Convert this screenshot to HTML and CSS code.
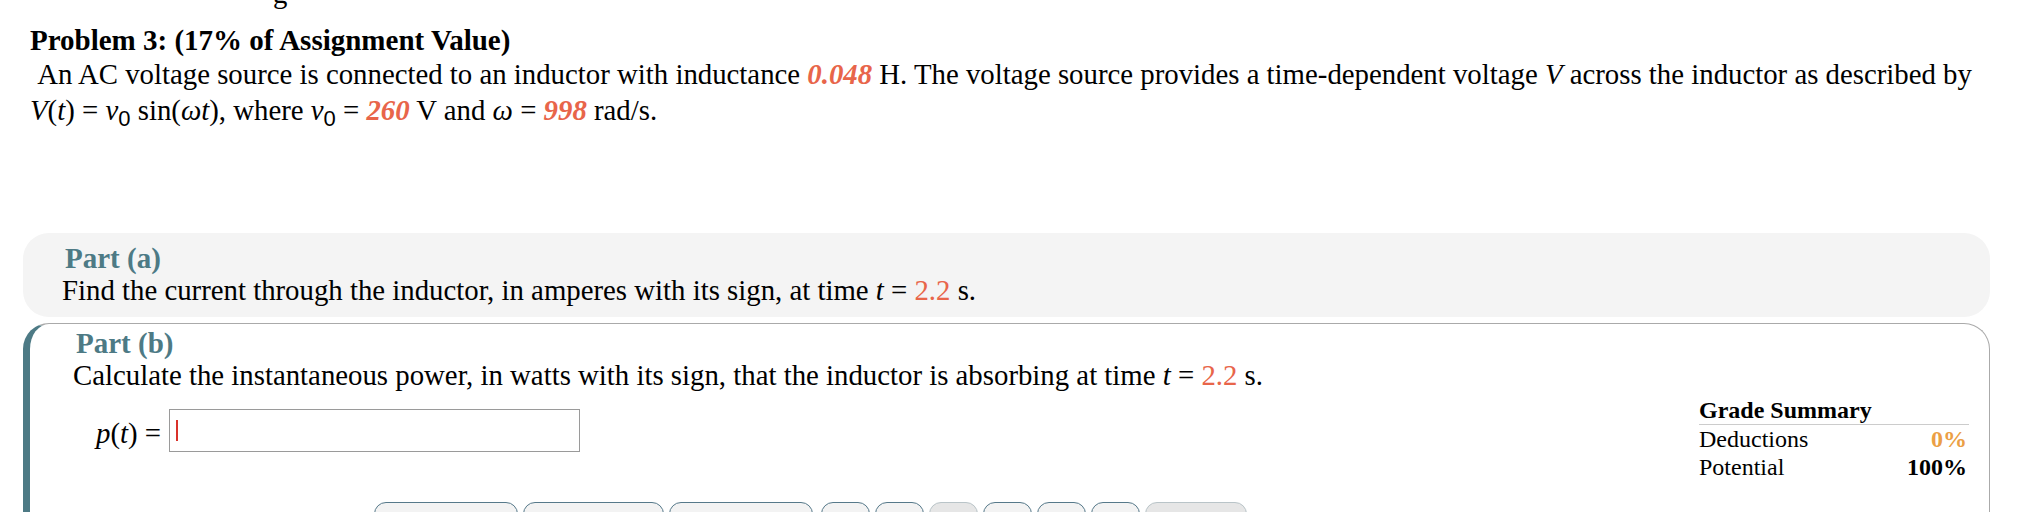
FILE: index.html
```html
<!DOCTYPE html>
<html lang="en">
<head>
<meta charset="utf-8">
<title>Problem 3</title>
<link rel="stylesheet" href="styles.css">
</head>
<body>
<div class="page">
  <div class="crumb">g</div>
  <div class="problem">
    <div class="problem-title">Problem 3: (17% of Assignment Value)</div>
    <div class="statement">&nbsp;An AC voltage source is connected to an inductor with inductance <span class="num">0.048</span> H. The voltage source provides a time-dependent voltage <i>V</i> across the inductor as described by<br><i>V</i>(<i>t</i>) = <i>v</i><sub class="sub">0</sub> sin(<i>ωt</i>), where <i>v</i><sub class="sub">0</sub> = <span class="num">260</span> V and <i>ω</i> = <span class="num">998</span> rad/s.</div>
  </div>

  <div class="part part-a">
    <div class="part-head">Part (a)</div>
    <div class="part-text">Find the current through the inductor, in amperes with its sign, at time <i>t</i> = <span class="val">2.2</span> s.</div>
  </div>

  <div class="part part-b">
    <div class="part-head">Part (b)</div>
    <div class="part-text">Calculate the instantaneous power, in watts with its sign, that the inductor is absorbing at time <i>t</i> = <span class="val">2.2</span> s.</div>
    <div class="answer-row">
      <div class="answer">
        <span class="answer-label"><i>p</i>(<i>t</i>) =</span>
        <div class="input"><span class="caret"></span></div>
      </div>
      <div class="grade">
        <div class="grade-head">Grade Summary</div>
        <div class="grade-row"><span>Deductions</span><span class="ded">0%</span></div>
        <div class="grade-row"><span>Potential</span><span class="pot">100%</span></div>
      </div>
    </div>
    <div class="keys">
      <button class="key wide" aria-label="sin()"></button>
      <button class="key wide w2" aria-label="cos()"></button>
      <button class="key wide" aria-label="tan()"></button>
      <button class="key small first-small" aria-label="pi"></button>
      <button class="key small" aria-label="("></button>
      <button class="key small dim" aria-label=")"></button>
      <button class="key small" aria-label="7"></button>
      <button class="key small" aria-label="8"></button>
      <button class="key small" aria-label="9"></button>
      <button class="key home dim" aria-label="HOME"></button>
    </div>
  </div>
</div>
</body>
</html>
```
FILE: styles.css
```css
html, body {
  margin: 0;
  padding: 0;
  background: #ffffff;
}

body {
  font-family: "Liberation Serif", "Times New Roman", serif;
  font-size: 28.8px;
  color: #000000;
}

.page {
  padding: 0 46px 0 23px;
}

.crumb {
  line-height: 30px;
  margin-top: -22px;
  padding-left: 250px;
}

.problem {
  padding-left: 7px;
}

.problem-title {
  font-weight: bold;
  font-size: 29px;
  line-height: 32px;
  margin-top: 16px;
}

.statement {
  line-height: 36px;
}

.num {
  color: #e8654a;
  font-weight: bold;
  font-style: italic;
}

.sub {
  font-family: "Liberation Sans", Arial, sans-serif;
  font-size: 22px;
  vertical-align: -6px;
  line-height: 0;
}

.part-a {
  margin-top: 105px;
  background: #f4f4f4;
  border-radius: 26px;
  padding: 9px 20px 11px 39px;
}

.part-head {
  color: #4d7a85;
  font-weight: bold;
  font-size: 29px;
  line-height: 32px;
  padding-left: 3px;
}

.part-text {
  line-height: 32px;
}

.val {
  color: #e8654a;
}

.part-b {
  margin-top: 6px;
  border: 1px solid #aaaaaa;
  border-left: 7px solid #4d7a85;
  border-bottom: none;
  border-radius: 26px 26px 0 0;
  padding: 3px 20px 40px 43px;
}

.answer-row {
  display: flex;
  justify-content: space-between;
  align-items: flex-start;
  margin-top: 5px;
}

.answer {
  display: flex;
  align-items: center;
  gap: 8px;
  margin-top: 13px;
  padding-left: 23px;
}

.answer-label {
  line-height: 32px;
  padding-top: 4px;
}

.input {
  box-sizing: border-box;
  width: 411px;
  height: 43px;
  border: 1px solid #9a9a9a;
  background: #ffffff;
  display: flex;
  align-items: center;
  padding-left: 6px;
}

.caret {
  width: 2px;
  height: 21px;
  background: #d9312a;
}

.grade {
  width: 270px;
  font-size: 24px;
}

.grade-head {
  font-weight: bold;
  line-height: 28px;
  border-bottom: 1px solid #cccccc;
}

.grade-row {
  display: flex;
  justify-content: space-between;
  line-height: 28px;
  padding-right: 2px;
}

.ded {
  color: #eb9f45;
  font-weight: bold;
}

.pot {
  font-weight: bold;
}

.keys {
  display: flex;
  gap: 5px;
  margin-top: 21px;
  margin-left: 301px;
}

.key {
  box-sizing: border-box;
  height: 40px;
  border: 1px solid #56798a;
  border-radius: 12px;
  background: #f3f3f3;
  padding: 0;
}

.wide {
  width: 144px;
}

.w2 {
  width: 141px;
}

.small {
  width: 49px;
}

.first-small {
  margin-left: 3px;
}

.home {
  width: 102px;
}

.dim {
  background: #e6e6e6;
  border-color: #b9c4c8;
}
```
